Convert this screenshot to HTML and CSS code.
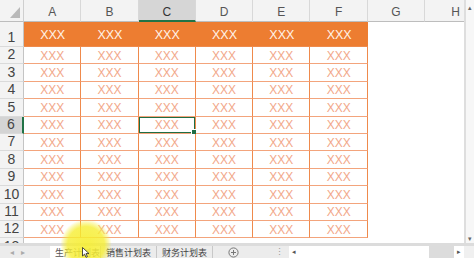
FILE: index.html
```html
<!DOCTYPE html>
<html>
<head>
<meta charset="utf-8">
<link rel="stylesheet" href="styles.css">
</head>
<body>
<div class="app">
  <div class="main">
    <div class="sheet">
      <div class="corner"><span class="tri"></span></div>
      <div class="ch">A</div><div class="ch">B</div><div class="ch sel">C</div><div class="ch">D</div><div class="ch">E</div><div class="ch">F</div><div class="ch">G</div><div class="ch last">H</div>

      <div class="rh">1</div>
      <div class="hd">XXX</div><div class="hd">XXX</div><div class="hd">XXX</div><div class="hd">XXX</div><div class="hd">XXX</div><div class="hd">XXX</div><div class="e"></div><div class="e"></div>

      <div class="rh">2</div>
      <div class="c">XXX</div><div class="c">XXX</div><div class="c">XXX</div><div class="c">XXX</div><div class="c">XXX</div><div class="c">XXX</div><div class="e"></div><div class="e"></div>
      <div class="rh">3</div>
      <div class="c">XXX</div><div class="c">XXX</div><div class="c">XXX</div><div class="c">XXX</div><div class="c">XXX</div><div class="c">XXX</div><div class="e"></div><div class="e"></div>
      <div class="rh">4</div>
      <div class="c">XXX</div><div class="c">XXX</div><div class="c">XXX</div><div class="c">XXX</div><div class="c">XXX</div><div class="c">XXX</div><div class="e"></div><div class="e"></div>
      <div class="rh">5</div>
      <div class="c">XXX</div><div class="c">XXX</div><div class="c">XXX</div><div class="c">XXX</div><div class="c">XXX</div><div class="c">XXX</div><div class="e"></div><div class="e"></div>
      <div class="rh sel">6</div>
      <div class="c">XXX</div><div class="c">XXX</div><div class="c sel">XXX</div><div class="c">XXX</div><div class="c">XXX</div><div class="c">XXX</div><div class="e"></div><div class="e"></div>
      <div class="rh">7</div>
      <div class="c">XXX</div><div class="c">XXX</div><div class="c">XXX</div><div class="c">XXX</div><div class="c">XXX</div><div class="c">XXX</div><div class="e"></div><div class="e"></div>
      <div class="rh">8</div>
      <div class="c">XXX</div><div class="c">XXX</div><div class="c">XXX</div><div class="c">XXX</div><div class="c">XXX</div><div class="c">XXX</div><div class="e"></div><div class="e"></div>
      <div class="rh">9</div>
      <div class="c">XXX</div><div class="c">XXX</div><div class="c">XXX</div><div class="c">XXX</div><div class="c">XXX</div><div class="c">XXX</div><div class="e"></div><div class="e"></div>
      <div class="rh">10</div>
      <div class="c">XXX</div><div class="c">XXX</div><div class="c">XXX</div><div class="c">XXX</div><div class="c">XXX</div><div class="c">XXX</div><div class="e"></div><div class="e"></div>
      <div class="rh">11</div>
      <div class="c">XXX</div><div class="c">XXX</div><div class="c">XXX</div><div class="c">XXX</div><div class="c">XXX</div><div class="c">XXX</div><div class="e"></div><div class="e"></div>
      <div class="rh">12</div>
      <div class="c">XXX</div><div class="c">XXX</div><div class="c">XXX</div><div class="c">XXX</div><div class="c">XXX</div><div class="c">XXX</div><div class="e"></div><div class="e"></div>
      <div class="rh r13"><span>13</span></div>
      <div class="e"></div><div class="e"></div><div class="e"></div><div class="e"></div><div class="e"></div><div class="e"></div><div class="e"></div><div class="e"></div>
    </div>
    <div class="vscroll">
      <span class="arr">&#9652;</span>
      <span class="arr">&#9662;</span>
    </div>
  </div>
  <div class="tabbar">
    <div class="nav"><span>&#9666;</span><span>&#9656;</span></div>
    <div class="tab active">生产计划表</div>
    <div class="tab">销售计划表</div>
    <div class="tab">财务计划表</div>
    <div class="add">
      <svg width="11" height="11" viewBox="0 0 11 11"><circle cx="5.5" cy="5.5" r="4.6" fill="none" stroke="#777" stroke-width="1"/><path d="M5.5 3v5M3 5.5h5" stroke="#777" stroke-width="1"/></svg>
    </div>
    <div class="dots">&#8942;</div>
    <div class="hscroll">
      <span class="harr">&#9666;</span>
      <span class="track"></span>
      <span class="thumb"></span>
      <span class="harr">&#9656;</span>
    </div>
    <div class="cornerbox"></div>
  </div>
  <div class="spot"></div>
  <svg class="cursor" width="8" height="11" viewBox="0 0 8 11"><path d="M0.5 0.5L0.5 9L2.6 7.1L4 10.3L5.4 9.7L4 6.6L7 6.6Z" fill="#fff" stroke="#222" stroke-width="0.8"/></svg>
</div>
</body>
</html>
```

FILE: styles.css
```css
* { box-sizing: border-box; }
html, body { margin: 0; padding: 0; }
body {
  width: 474px;
  height: 258px;
  overflow: hidden;
  background: #fff;
  font-family: "Liberation Sans", Arial, "Noto Sans CJK SC", sans-serif;
}
.app {
  position: relative;
  width: 474px;
  height: 258px;
  display: flex;
  flex-direction: column;
  overflow: hidden;
}
.main {
  display: flex;
  height: 243px;
  overflow: hidden;
}
.sheet {
  flex: 1;
  display: grid;
  grid-template-columns: 24px repeat(7, 57.3px) 1fr;
  grid-template-rows: 22px 25px repeat(11, 17.4px) 4.6px;
  overflow: hidden;
  height: 243px;
}
.corner {
  position: relative;
  background: #f3f3f3;
  border-right: 1px solid #cfcfcf;
  border-bottom: 1px solid #bdbdbd;
}
.tri {
  position: absolute;
  right: 3px;
  bottom: 3px;
  width: 0;
  height: 0;
  border-left: 10px solid transparent;
  border-bottom: 11px solid #b9b9b9;
}
.ch {
  background: #f3f3f3;
  border-right: 1px solid #d8d8d8;
  border-bottom: 1px solid #bdbdbd;
  color: #555;
  font-size: 12px;
  display: flex;
  align-items: flex-end;
  justify-content: center;
  padding-bottom: 2px;
}
.ch.last { border-right: none; justify-content: flex-end; padding-right: 4px; }
.ch.sel {
  background: #d6d6d6;
  border-bottom: 2px solid #217346;
  color: #333;
  padding-bottom: 1px;
}
.rh {
  background: #f3f3f3;
  border-right: 1px solid #c4c4c4;
  border-bottom: 1px solid #dadada;
  color: #444;
  font-size: 14px;
  display: flex;
  align-items: flex-end;
  justify-content: center;
  line-height: 1;
  padding-bottom: 2px;
}
.rh.r13 {
  align-items: flex-start;
  padding: 0;
  border-bottom: none;
  overflow: hidden;
}
.rh.r13 span { display: block; height: 4.6px; overflow: hidden; line-height: 14px; padding-top: 1px; }
.rh.sel {
  background: #d4d4d4;
  border-right: 2px solid #217346;
}
.hd {
  background: #ed7d31;
  color: #fff2e8;
  font-size: 12.5px;
  display: flex;
  align-items: center;
  justify-content: center;
  border-bottom: 1px solid #ee8a4c;
  padding-top: 2px;
}
.c {
  position: relative;
  color: #f2a88a;
  font-size: 12px;
  display: flex;
  align-items: center;
  justify-content: center;
  border-right: 1px solid #ef8a4c;
  border-bottom: 1px solid #f3a47c;
  padding-top: 1px;
}
.c.sel {
  box-shadow: inset 0 0 0 1px #1f6e45;
}
.c.sel::after {
  content: "";
  position: absolute;
  right: -2px;
  bottom: -2px;
  width: 4px;
  height: 4px;
  background: #1f6e45;
  border: 1px solid #fff;
}
.e { background: #fff; }
.vscroll {
  width: 10px;
  background: #f7f7f7;
  border-left: 2px solid #dedede;
  display: flex;
  flex-direction: column;
  justify-content: space-between;
  align-items: center;
  font-size: 7px;
  color: #666;
  padding: 4px 0 0 0;
}
.arr { line-height: 8px; }
.tabbar {
  height: 15px;
  background: #ececec;
  border-top: 3px solid #dcdcdc;
  display: flex;
  align-items: stretch;
  font-size: 9px;
  color: #444;
}
.nav {
  width: 50px;
  display: flex;
  gap: 7px;
  padding-left: 10px;
  align-items: center;
  color: #aaa;
  font-size: 8px;
}
.tab {
  display: flex;
  align-items: center;
  padding: 0 5px;
  border-right: 1px solid #c8c8c8;
  font-family: "Noto Sans CJK SC", sans-serif;
  font-size: 9px;
  line-height: 1;
  white-space: nowrap;
}
.tab.active {
  background: #fff;
  width: 51px;
  color: #555;
  border-right: 1px solid #c8c8c8;
}
.add {
  width: 40px;
  display: flex;
  align-items: center;
  justify-content: center;
}
.dots {
  width: 36px;
  display: flex;
  align-items: center;
  justify-content: flex-end;
  padding-right: 5px;
  color: #999;
  font-size: 9px;
}
.hscroll {
  flex: 1;
  display: flex;
  align-items: center;
  background: #fff;
  font-size: 7px;
  color: #555;
}
.harr { width: 10px; text-align: center; }
.track { flex: 1; }
.thumb { width: 25px; height: 100%; background: #dcdcdc; }
.cornerbox { width: 10px; background: #f0f0f0; }
.spot {
  position: absolute;
  left: 60px;
  top: 219px;
  width: 52px;
  height: 52px;
  border-radius: 50%;
  background: radial-gradient(circle, rgba(246,238,50,0.9) 0%, rgba(246,238,50,0.8) 50%, rgba(246,238,50,0.35) 62%, rgba(246,238,50,0) 70%);
}
.cursor {
  position: absolute;
  left: 82px;
  top: 247px;
}
```
